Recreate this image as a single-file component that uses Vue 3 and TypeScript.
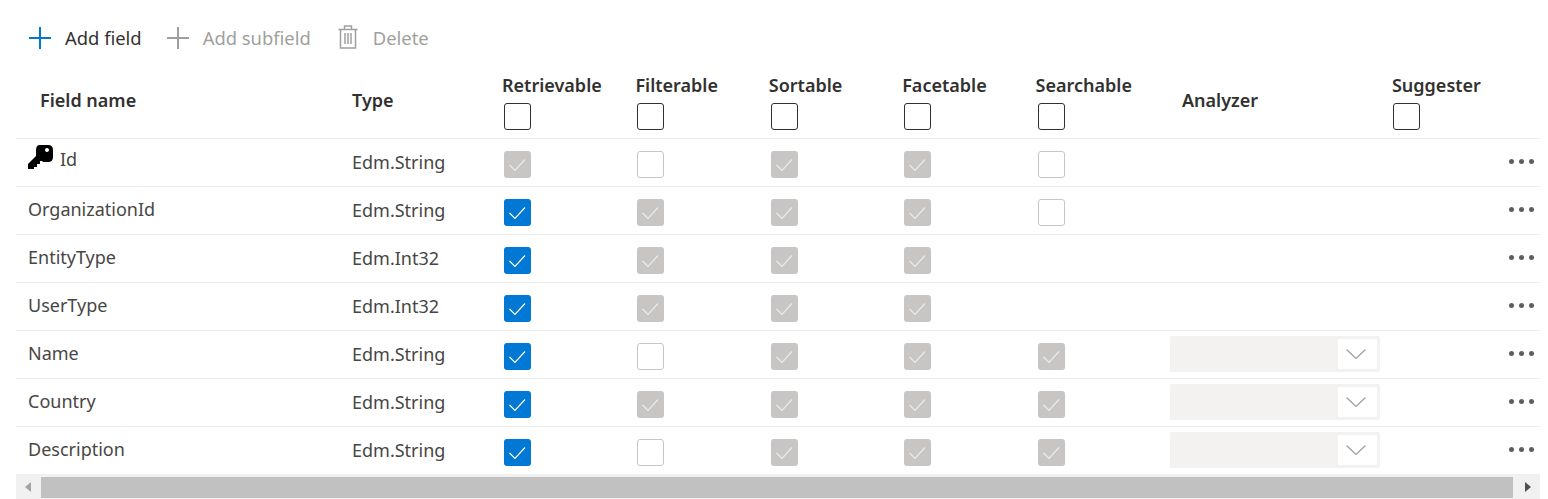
<script setup lang="ts">
type Mark = "on" | "dis" | "off" | "none";
interface Row {
  name: string;
  type: string;
  key?: boolean;
  marks: Mark[];
  analyzer?: boolean;
}
const headers = ["Retrievable", "Filterable", "Sortable", "Facetable", "Searchable"];
const rows: Row[] = [
  { name: "Id", type: "Edm.String", key: true, marks: ["dis", "off", "dis", "dis", "off"] },
  { name: "OrganizationId", type: "Edm.String", marks: ["on", "dis", "dis", "dis", "off"] },
  { name: "EntityType", type: "Edm.Int32", marks: ["on", "dis", "dis", "dis", "none"] },
  { name: "UserType", type: "Edm.Int32", marks: ["on", "dis", "dis", "dis", "none"] },
  { name: "Name", type: "Edm.String", marks: ["on", "off", "dis", "dis", "dis"], analyzer: true },
  { name: "Country", type: "Edm.String", marks: ["on", "dis", "dis", "dis", "dis"], analyzer: true },
  { name: "Description", type: "Edm.String", marks: ["on", "off", "dis", "dis", "dis"], analyzer: true },
];
</script>

<template>
  <div class="page">
    <div class="toolbar">
      <button class="tool primary">
        <svg class="plus" viewBox="0 0 22 22"><path d="M11 0v22M0 11h22" /></svg>
        <span>Add field</span>
      </button>
      <button class="tool">
        <svg class="plus" viewBox="0 0 22 22"><path d="M11 0v22M0 11h22" /></svg>
        <span>Add subfield</span>
      </button>
      <button class="tool trash-tool">
        <svg class="trash" viewBox="0 0 20 24">
          <path d="M.5 4.500h19M6.500 4.500V1h7v3.500M2.500 4.500V23h15V4.500M7 8v11M10 8v11M13 8v11" />
        </svg>
        <span>Delete</span>
      </button>
    </div>

    <div class="grid head">
      <div class="hcell first">Field name</div>
      <div class="hcell second">Type</div>
      <div v-for="h in headers" :key="h" class="hcell stack">
        <span>{{ h }}</span>
        <i class="box head-box"></i>
      </div>
      <div class="hcell analyzer-head">Analyzer</div>
      <div class="hcell stack sugg">
        <span>Suggester</span>
        <i class="box head-box"></i>
      </div>
      <div></div>
    </div>

    <div v-for="r in rows" :key="r.name" class="grid row">
      <div class="name" :class="{ 'has-key': r.key }">
        <svg v-if="r.key" class="key" viewBox="0 0 25 25">
          <path fill-rule="evenodd" d="M12 1h8q5 0 5 5v7q0 5-5 5h-5l-1-1h-2v3H9v3H6v2H0v-5l8-8V6q0-5 4-5zm7 3a2 2 0 1 0 .01 0z" />
        </svg>
        <span>{{ r.name }}</span>
      </div>
      <div class="type">{{ r.type }}</div>
      <div v-for="(m, i) in r.marks" :key="i" class="mark">
        <i v-if="m !== 'none'" class="box" :class="m">
          <svg v-if="m === 'on' || m === 'dis'" viewBox="0 0 27 27">
            <path d="M5.500 14l5.500 5.500 10-11" />
          </svg>
        </i>
      </div>
      <div class="analyzer">
        <div v-if="r.analyzer" class="select">
          <span class="chev">
            <svg viewBox="0 0 20 10"><path d="M.5.500l9.500 9 9.500-9" /></svg>
          </span>
        </div>
      </div>
      <div></div>
      <div class="more"><i></i><i></i><i></i></div>
    </div>

    <div class="scrollbar">
      <span class="arrow left"></span>
      <span class="thumb"></span>
      <span class="arrow right"></span>
    </div>
  </div>
</template>

<style scoped>
.page {
  width: 1524px;
  height: 499px;
  margin-left: 16px;
  overflow: hidden;
  font-family: "Noto Sans", "Open Sans", sans-serif;
  font-size: 18px;
  color: #323130;
  background: #fff;
}
.toolbar {
  height: 60px;
  padding: 16px 0 0 13px;
  box-sizing: border-box;
  display: flex;
  align-items: flex-start;
  font-size: 18.4px;
}
.tool {
  display: flex;
  align-items: center;
  height: 44px;
  padding: 0;
  margin-right: 24px;
  border: 0;
  background: none;
  font: inherit;
  color: #a19f9d;
}
.tool span {
  margin-top: -2px;
}
.tool.primary {
  color: #323130;
  margin-right: 25px;
}
.plus {
  width: 22px;
  height: 22px;
  margin-right: 14px;
  fill: none;
  stroke: #a19f9d;
  stroke-width: 2;
}
.primary .plus {
  stroke: #0078d4;
}
.trash-tool {
  margin-left: 3px;
}
.trash {
  width: 20px;
  height: 24px;
  margin: -3px 15px 0 0;
  fill: none;
  stroke: #a19f9d;
  stroke-width: 1.5;
}
.grid {
  display: grid;
  grid-template-columns: 324px 150px repeat(5, 133.4px) 223px 100px 1fr;
}
.head {
  height: 78px;
  font-weight: 600;
  align-items: center;
}
.hcell {
  padding-left: 12px;
  white-space: nowrap;
}
.hcell.first {
  padding: 2px 0 0 24px;
}
.hcell.second {
  padding-top: 2px;
}
.analyzer-head {
  padding: 2px 0 0 25px;
}
.head > :nth-child(n + 3) {
  align-self: start;
}
.head .analyzer-head {
  align-self: center;
}
.stack {
  display: flex;
  flex-direction: column;
  align-items: flex-start;
  padding-top: 12px;
}
.stack span {
  line-height: 26px;
}
.box {
  display: block;
  box-sizing: border-box;
  width: 27px;
  height: 27px;
  border-radius: 3px;
}
.head-box {
  margin: 5px 0 0 2px;
  border: 1.5px solid #323130;
}
.sugg .head-box {
  margin-left: 1px;
}
.row {
  height: 48px;
  box-sizing: border-box;
  border-top: 1px solid #edebe9;
  align-items: center;
  color: #484644;
}
.name {
  display: flex;
  align-items: center;
  padding: 0 0 3px 12px;
}
.name.has-key {
  padding-bottom: 7px;
}
.key {
  width: 25px;
  height: 25px;
  margin: -6px 7px 0 0;
  fill: #000;
}
.type {
  padding: 0 0 2px 12px;
}
.mark {
  padding: 4px 0 0 14px;
  height: 27px;
}
.box.on {
  background: #0078d4;
}
.box.dis {
  background: #c8c6c4;
}
.box.off {
  border: 1px solid #c8c6c4;
}
.box svg {
  display: block;
  width: 27px;
  height: 27px;
  fill: none;
  stroke-width: 1.2;
  stroke: #fff;
}
.box.dis svg {
  stroke: #edebe9;
}
.analyzer {
  padding: 0 0 2px 13px;
}
.select {
  box-sizing: border-box;
  width: 210px;
  height: 36px;
  border-radius: 2px;
  background: #f3f2f1;
  display: flex;
  justify-content: flex-end;
  padding: 3px;
}
.chev {
  width: 39px;
  height: 30px;
  padding-right: 2px;
  box-sizing: border-box;
  background: #fff;
  display: flex;
  align-items: center;
  justify-content: center;
}
.chev svg {
  width: 20px;
  height: 10px;
  fill: none;
  stroke: #a19f9d;
  stroke-width: 1.2;
}
.more {
  display: flex;
  gap: 5px;
  justify-content: flex-end;
  padding: 0 6px 3px 0;
}
.more i {
  width: 5px;
  height: 5px;
  border-radius: 50%;
  background: #605e5c;
}
.scrollbar {
  height: 25px;
  box-sizing: border-box;
  padding-top: 3px;
  background: #f1f1f1;
  display: flex;
  align-items: stretch;
}
.thumb {
  flex: 1;
  height: 21px;
  background: #c1c1c1;
}
.arrow {
  width: 25px;
  height: 21px;
  display: flex;
  position: relative;
}
.arrow.left {
  width: 25px;
}
.arrow.right {
  width: 27px;
}
.arrow::before {
  content: "";
  position: absolute;
  top: 5px;
  border-style: solid;
  border-width: 5.500px 6px;
  border-color: transparent;
}
.arrow.left::before {
  left: 3px;
  border-right-color: #a3a3a3;
}
.arrow.right::before {
  left: 12px;
  border-left-color: #505050;
}
</style>
